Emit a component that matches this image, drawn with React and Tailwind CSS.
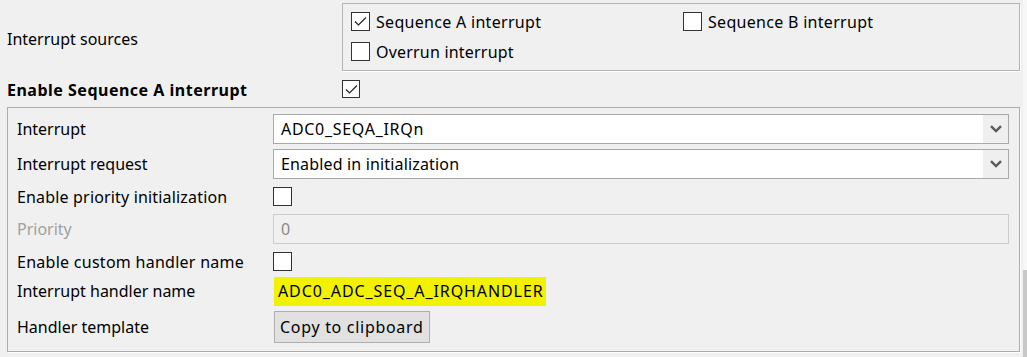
import React from 'react'

const FONT = { fontFamily: '"Noto Sans", "Open Sans", sans-serif' }

function CheckBox({ checked, small }) {
  return (
    <div
      className={`${small ? 'w-[18px] h-[18px]' : 'w-[19px] h-[19px]'} shrink-0 border border-[#333333] bg-white flex items-center justify-center`}
    >
      {checked && (
        <svg width="13" height="11" viewBox="0 0 13 11" fill="none">
          <path d="M1 5.5 L4.5 9 L12 1.5" stroke="#222222" strokeWidth="1.2" />
        </svg>
      )}
    </div>
  )
}

function Chevron() {
  return (
    <svg width="12" height="8" viewBox="0 0 12 8" fill="none">
      <path d="M1 1.2 L6 6 L11 1.2" stroke="#5a5a5a" strokeWidth="2.4" />
    </svg>
  )
}

function Combo({ value, tracking }) {
  return (
    <div className="w-[736px] h-[30px] border border-[#a9a9a9] bg-white flex items-center">
      <span className={`flex-1 pl-[7px] text-black ${tracking}`}>{value}</span>
      <div className="w-[25px] h-[28px] bg-[#efefef] flex items-center justify-center">
        <Chevron />
      </div>
    </div>
  )
}

function Row({ label, disabled, tracking = '', className, children }) {
  return (
    <div className={`flex items-center ${className}`}>
      <div className={`w-[256px] shrink-0 ${tracking} ${disabled ? 'text-[#a0a0a0]' : 'text-black'}`}>{label}</div>
      {children}
    </div>
  )
}

export default function App() {
  return (
    <div
      className="w-[1027px] h-[357px] bg-[#f0f0f0] flex text-[16px] leading-none overflow-hidden"
      style={FONT}
    >
      <div className="flex-1 flex flex-col">
        {/* interrupt sources */}
        <div className="flex items-center pt-[3px]">
          <div className="w-[342px] pl-[7px] pt-[3px] text-black">Interrupt sources</div>
          <div className="w-[678px] h-[68px] border border-[#b4b4b4] shadow-[1px_1px_0_#ffffff] pl-[8px] pt-[8px] grid grid-cols-[332px_1fr] gap-y-[11px] content-start">
            <div className="flex items-center gap-[6px]">
              <CheckBox checked />
              <span className="tracking-[0.3px]">Sequence A interrupt</span>
            </div>
            <div className="flex items-center gap-[6px]">
              <CheckBox />
              <span className="tracking-[0.3px]">Sequence B interrupt</span>
            </div>
            <div className="flex items-center gap-[6px]">
              <CheckBox />
              <span className="tracking-[0.2px]">Overrun interrupt</span>
            </div>
          </div>
        </div>

        {/* enable sequence A */}
        <div className="flex items-center h-[36px]">
          <div className="w-[342px] pl-[7px] pt-[1px] font-bold tracking-[0.5px] text-black">Enable Sequence A interrupt</div>
          <CheckBox checked small />
        </div>

        {/* interrupt settings */}
        <div className="ml-[7px] w-[1013px] h-[245px] border border-[#adadad] shadow-[1px_1px_0_#ffffff] pl-[9px] pt-[6px] flex flex-col">
          <Row label="Interrupt" className="h-[30px]">
            <Combo value="ADC0_SEQA_IRQn" tracking="tracking-[0.7px]" />
          </Row>
          <Row label="Interrupt request" className="h-[30px] mt-[5px]">
            <Combo value="Enabled in initialization" tracking="tracking-[0.16px]" />
          </Row>
          <Row label="Enable priority initialization" tracking="tracking-[0.17px]" className="h-[25px] mt-[5px]">
            <CheckBox />
          </Row>
          <Row label="Priority" disabled className="h-[30px] mt-[5px]">
            <div className="w-[736px] h-[30px] border border-[#cccccc] bg-[#f0f0f0] flex items-center pl-[7px] text-[#8a8a8a]">
              0
            </div>
          </Row>
          <Row label="Enable custom handler name" tracking="tracking-[0.27px]" className="h-[25px] mt-[5px]">
            <CheckBox />
          </Row>
          <Row label="Interrupt handler name" className="h-[30px] mt-[2px]">
            <span className="ml-[1px] h-[29px] pl-[4px] pr-[2px] bg-[#f2f200] flex items-center text-black tracking-[0.9px]">
              ADC0_ADC_SEQ_A_IRQHANDLER
            </span>
          </Row>
          <Row label="Handler template" className="h-[32px] mt-[5px]">
            <button className="ml-[1px] h-[32px] px-[5px] bg-[#e1e1e1] border border-[#adadad] text-black tracking-[0.7px]">
              Copy to clipboard
            </button>
          </Row>
        </div>
      </div>

      {/* scrollbar */}
      <div className="w-[4px] flex flex-col">
        <div className="h-[270px] bg-[#f7f7f7]" />
        <div className="flex-1 bg-[#c8c8c8]" />
      </div>
    </div>
  )
}
